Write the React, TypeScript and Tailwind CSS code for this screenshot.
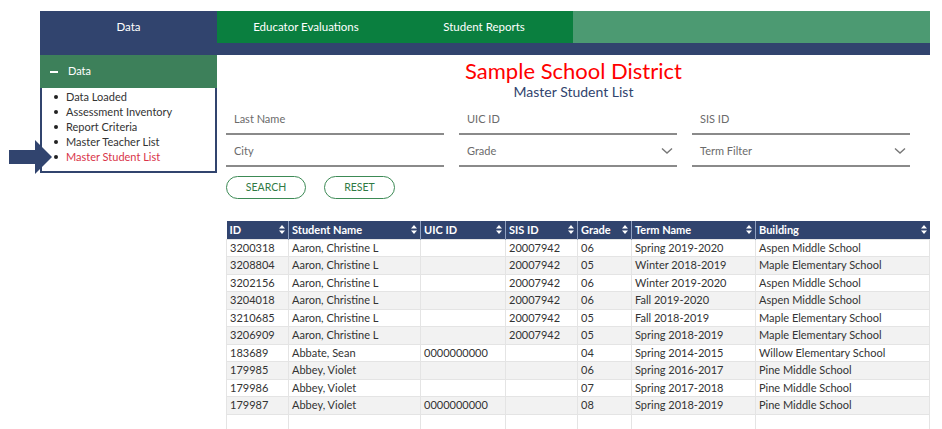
import React from 'react';

const rows = [
  ['3200318', 'Aaron, Christine L', '', '20007942', '06', 'Spring 2019-2020', 'Aspen Middle School'],
  ['3208804', 'Aaron, Christine L', '', '20007942', '05', 'Winter 2018-2019', 'Maple Elementary School'],
  ['3202156', 'Aaron, Christine L', '', '20007942', '06', 'Winter 2019-2020', 'Aspen Middle School'],
  ['3204018', 'Aaron, Christine L', '', '20007942', '06', 'Fall 2019-2020', 'Aspen Middle School'],
  ['3210685', 'Aaron, Christine L', '', '20007942', '05', 'Fall 2018-2019', 'Maple Elementary School'],
  ['3206909', 'Aaron, Christine L', '', '20007942', '05', 'Spring 2018-2019', 'Maple Elementary School'],
  ['183689', 'Abbate, Sean', '0000000000', '', '04', 'Spring 2014-2015', 'Willow Elementary School'],
  ['179985', 'Abbey, Violet', '', '', '06', 'Spring 2016-2017', 'Pine Middle School'],
  ['179986', 'Abbey, Violet', '', '', '07', 'Spring 2017-2018', 'Pine Middle School'],
  ['179987', 'Abbey, Violet', '0000000000', '', '08', 'Spring 2018-2019', 'Pine Middle School'],
  ['', '', '', '', '', '', ''],
];

const cols = [
  { name: 'ID', w: 'w-[62px]' },
  { name: 'Student Name', w: 'w-[132px]' },
  { name: 'UIC ID', w: 'w-[85px]' },
  { name: 'SIS ID', w: 'w-[72px]' },
  { name: 'Grade', w: 'w-[54px]' },
  { name: 'Term Name', w: 'w-[124px]' },
  { name: 'Building', w: 'w-[174px]' },
];

const SortIcon = () => (
  <svg width="6" height="9" viewBox="0 0 6 9" className="shrink-0">
    <path d="M3 0 L6 3.5 L0 3.5 Z M3 9 L6 5.5 L0 5.5 Z" fill="white" />
  </svg>
);

const Chevron = () => (
  <svg width="12" height="8" viewBox="0 0 12 8" className="mr-1">
    <path d="M1 1.5 L6 6 L11 1.5" stroke="#777" strokeWidth="1.4" fill="none" />
  </svg>
);

function Field({ label, select }: { label: string; select?: boolean }) {
  return (
    <div className="h-[30px] flex items-center justify-between pl-2 border-b-2 border-[#8a8a8a] text-[11px] text-[#6b6b6b]">
      <span>{label}</span>
      {select && <Chevron />}
    </div>
  );
}

export default function App() {
  return (
    <div className="bg-white w-[942px] h-[429px] overflow-hidden pt-[11px] pl-[40px]" style={{ fontFamily: 'Lato, "Open Sans", sans-serif' }}>
      <div className="w-[890px]">
        {/* top tabs */}
        <div className="flex h-[32px] text-[11.5px] text-white">
          <div className="w-[177px] bg-[#31446e] flex items-center justify-center">Data</div>
          <div className="w-[178px] bg-[#0a7f3f] flex items-center justify-center">Educator Evaluations</div>
          <div className="w-[178px] bg-[#0a7f3f] flex items-center justify-center">Student Reports</div>
          <div className="flex-1 bg-[#4c9a72]"></div>
        </div>
        <div className="h-[12px] bg-[#31446e]"></div>

        <div className="flex">
          {/* sidebar */}
          <div className="w-[177px] shrink-0 relative">
            <div className="h-[33px] bg-[#3d805a] flex items-center pl-[10px] text-[11px] text-white">
              <span className="inline-block w-[8px] h-[2px] bg-white mr-[10px]"></span>
              Data
            </div>
            <ul className="border-2 border-t-0 border-[#31446e] h-[85px] pt-[1px] pl-[12px] text-[11px] leading-[15px] text-[#333]">
              {['Data Loaded', 'Assessment Inventory', 'Report Criteria', 'Master Teacher List'].map(t => (
                <li key={t} className="flex items-center">
                  <span className="w-[4px] h-[4px] rounded-full bg-[#222] mr-[8px]"></span>{t}
                </li>
              ))}
              <li className="flex items-center text-[#d9354a]">
                <span className="w-[4px] h-[4px] rounded-full bg-[#222] mr-[8px]"></span>Master Student List
              </li>
            </ul>
            {/* arrow pointer */}
            <svg width="44" height="34" viewBox="0 0 44 34" className="absolute left-[-31px] top-[85px]">
              <path d="M0 10 H26 V0 L43 17 L26 34 V24 H0 Z" fill="#31446e" />
            </svg>
          </div>

          {/* main */}
          <div className="flex-1">
            <div className="text-center pt-[3px]">
              <div className="text-[22px] leading-[26px] text-[#ff0000]">Sample School District</div>
              <div className="text-[14px] leading-[15px] text-[#31446e]">Master Student List</div>
            </div>
            <div className="pl-[9px] pr-[20px] pt-[6px] grid grid-cols-3 gap-x-[15px] gap-y-[2px]">
              <Field label="Last Name" />
              <Field label="UIC ID" />
              <Field label="SIS ID" />
              <Field label="City" />
              <Field label="Grade" select />
              <Field label="Term Filter" select />
            </div>
            <div className="pl-[9px] pt-[9px] flex gap-[18px]">
              <button className="w-[80px] h-[23px] rounded-full border border-[#3c8a55] text-[#2f7a44] text-[10.5px]">SEARCH</button>
              <button className="w-[71px] h-[23px] rounded-full border border-[#3c8a55] text-[#2f7a44] text-[10.5px]">RESET</button>
            </div>
            <div className="pl-[9px] pt-[22px]">
              <table className="border-collapse text-[11px] text-[#333] table-fixed w-[703px]">
                <thead>
                  <tr className="bg-[#31446e] text-white h-[18px]">
                    {cols.map(c => (
                      <th key={c.name} className={`${c.w} p-0 border-r border-[#8fa0c0] last:border-r-0 text-left font-bold`}>
                        <div className="flex items-center justify-between pl-[3px] pr-[3px]">
                          <span>{c.name}</span>
                          <SortIcon />
                        </div>
                      </th>
                    ))}
                  </tr>
                </thead>
                <tbody>
                  {rows.map((r, i) => (
                    <tr key={i} className={`h-[17.5px] ${i % 2 === 1 ? 'bg-[#f2f2f2]' : 'bg-white'}`}>
                      {r.map((v, j) => (
                        <td key={j} className="p-0 pl-[3px] border border-[#e4e4e4] leading-[16px] whitespace-nowrap">{v}</td>
                      ))}
                    </tr>
                  ))}
                </tbody>
              </table>
            </div>
          </div>
        </div>
      </div>
    </div>
  );
}
